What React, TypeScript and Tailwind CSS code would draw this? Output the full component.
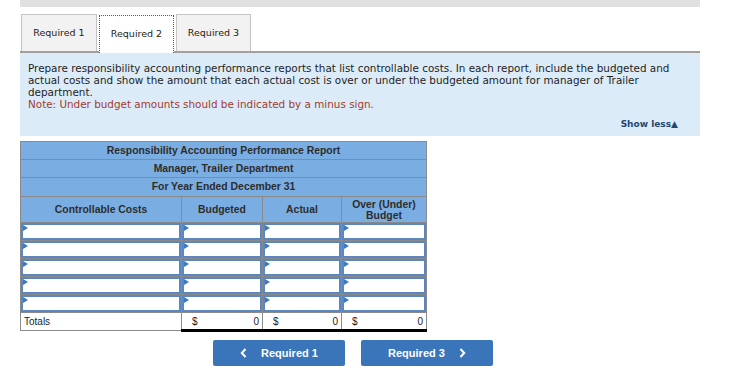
import React from "react";

const Flag = () => (
  <span className="absolute left-0 top-0 w-0 h-0 border-t-[3px] border-b-[3px] border-l-[5px] border-t-transparent border-b-transparent border-l-[#3d78c2]" />
);

const InputCell = ({ w }: { w: string }) => (
  <td className={`p-0 border border-[#8a8a8a] ${w}`}>
    <div className="relative h-[17px] bg-white border-2 border-[#5a87c0]">
      <Flag />
    </div>
  </td>
);

export default function App() {
  const rows = [0, 1, 2, 3, 4];
  return (
    <div className="w-[740px] h-[384px] bg-white relative" style={{ fontFamily: '"DejaVu Sans", Verdana, sans-serif' }}>
      <div className="mx-[20px] w-[680px]">
        <div className="h-[7px] bg-[#e0e0e0]" />
        <div className="mt-[7px] flex items-end gap-[2px] pl-[1px] border-b-2 border-[#a0a0a0] h-[39px]">
          <div className="w-[76px] h-[37px] bg-[#f2f2f2] border border-b-0 border-[#c4c4c4] flex items-center justify-center text-[9.5px] text-[#222]">
            Required 1
          </div>
          <div className="w-[75px] h-[38px] -mb-[2px] bg-white border border-dotted border-b-0 border-[#3c5f8f] flex items-center justify-center text-[9.5px] text-[#222]">
            Required 2
          </div>
          <div className="w-[75px] h-[37px] bg-[#f2f2f2] border border-b-0 border-[#c4c4c4] flex items-center justify-center text-[9.5px] text-[#222]">
            Required 3
          </div>
        </div>
        <div className="bg-[#dcebf8] pt-[9px] pl-[8px] pr-[22px] h-[83px] text-[10.4px] leading-[12px]">
          <p className="text-[#1e1e1e]">
            Prepare responsibility accounting performance reports that list controllable costs. In each report, include the budgeted and actual costs and show the amount that each actual cost is over or under the budgeted amount for manager of Trailer department.
          </p>
          <p className="text-[#a23b2e]">Note: Under budget amounts should be indicated by a minus sign.</p>
          <div className="mt-[8px] flex justify-end">
            <span className="font-bold text-[#23476e] text-[9px]">Show less▲</span>
          </div>
        </div>
      </div>

      <div className="ml-[20px] mt-[5px]" style={{ fontFamily: '"Liberation Sans", Arial, sans-serif' }}>
        <table className="border-collapse w-[407px] text-[10.4px]">
          <tbody>
            <tr className="h-[18px] bg-[#7aade2]">
              <td colSpan={4} className="border border-[#8a8a8a] text-center font-bold text-[#2d2d2d] p-0">
                Responsibility Accounting Performance Report
              </td>
            </tr>
            <tr className="h-[18px] bg-[#7aade2]">
              <td colSpan={4} className="border border-[#8a8a8a] text-center font-bold text-[#2d2d2d] p-0">
                Manager, Trailer Department
              </td>
            </tr>
            <tr className="h-[19px] bg-[#7aade2]">
              <td colSpan={4} className="border border-[#8a8a8a] text-center font-bold text-[#2d2d2d] p-0">
                For Year Ended December 31
              </td>
            </tr>
            <tr className="h-[26px] bg-[#7aade2] leading-[11px]">
              <td className="w-[161px] border border-[#8a8a8a] text-center font-bold text-[#2d2d2d] p-0">Controllable Costs</td>
              <td className="w-[81px] border border-[#8a8a8a] text-center font-bold text-[#2d2d2d] p-0">Budgeted</td>
              <td className="w-[79px] border border-[#8a8a8a] text-center font-bold text-[#2d2d2d] p-0">Actual</td>
              <td className="w-[85px] border border-[#8a8a8a] text-center font-bold text-[#2d2d2d] p-0">
                Over (Under)
                <br />
                Budget
              </td>
            </tr>
            {rows.map((r) => (
              <tr key={r} className="h-[18px]">
                <InputCell w="w-[161px]" />
                <InputCell w="w-[81px]" />
                <InputCell w="w-[79px]" />
                <InputCell w="w-[85px]" />
              </tr>
            ))}
            <tr className="h-[18px] text-[#222] text-[10px]">
              <td className="border border-[#8a8a8a] pl-[3px] p-0">Totals</td>
              <td className="border border-[#8a8a8a] border-b-[3px] border-b-black p-0">
                <div className="flex justify-between pl-[10px] pr-[3px]"><span>$</span><span>0</span></div>
              </td>
              <td className="border border-[#8a8a8a] border-b-[3px] border-b-black p-0">
                <div className="flex justify-between pl-[10px] pr-[3px]"><span>$</span><span>0</span></div>
              </td>
              <td className="border border-[#8a8a8a] border-b-[3px] border-b-black p-0">
                <div className="flex justify-between pl-[10px] pr-[3px]"><span>$</span><span>0</span></div>
              </td>
            </tr>
          </tbody>
        </table>
      </div>

      <div className="flex gap-[16px] ml-[213px] mt-[8px]" style={{ fontFamily: '"Liberation Sans", Arial, sans-serif' }}>
        <div className="w-[132px] h-[26px] bg-[#3a75b9] rounded-[2px] flex items-center justify-center gap-[14px] text-white font-bold text-[11px]">
          <svg width="7" height="10" viewBox="0 0 7 10"><path d="M5.5 1 L1.8 5 L5.5 9" stroke="white" strokeWidth="2" fill="none" /></svg>
          <span>Required 1</span>
        </div>
        <div className="w-[132px] h-[26px] bg-[#3a75b9] rounded-[2px] flex items-center justify-center gap-[14px] text-white font-bold text-[11px]">
          <span>Required 3</span>
          <svg width="7" height="10" viewBox="0 0 7 10"><path d="M1.5 1 L5.2 5 L1.5 9" stroke="white" strokeWidth="2" fill="none" /></svg>
        </div>
      </div>
    </div>
  );
}
